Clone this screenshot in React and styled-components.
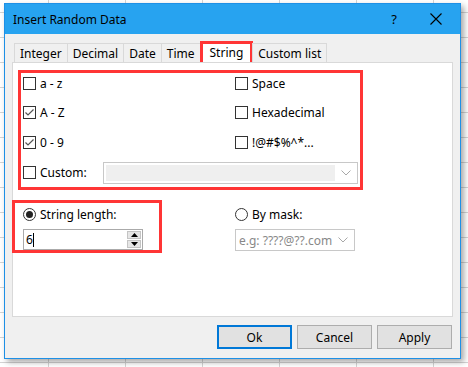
import React from 'react'
import styled, { createGlobalStyle } from 'styled-components'

const GlobalStyle = createGlobalStyle`
    html, body {
        margin: 0;
        padding: 0;
    }
    body {
        font-family: "Noto Sans", "Open Sans", sans-serif;
        font-size: 12px;
        color: #000;
    }
`

const tabs = ['Integer', 'Decimal', 'Date', 'Time', 'String', 'Custom list']

function Check({ checked }) {
    return (
        <CheckBox>
            {checked && (
                <svg width="11" height="11" viewBox="0 0 11 11">
                    <path d="M1.5 5.5 L4 8 L9.5 2.5" fill="none" stroke="#555" strokeWidth="1.2" />
                </svg>
            )}
        </CheckBox>
    )
}

function Option({ checked, children }) {
    return (
        <OptionRow>
            <Check checked={checked} />
            <span>{children}</span>
        </OptionRow>
    )
}

function Radio({ checked, children }) {
    return (
        <OptionRow>
            <RadioCircle>{checked && <RadioDot />}</RadioCircle>
            <span>{children}</span>
        </OptionRow>
    )
}

function Chevron() {
    return (
        <svg width="10" height="6" viewBox="0 0 10 6">
            <path d="M0.5 0.5 L5 5 L9.5 0.5" fill="none" stroke="#a8a8a8" strokeWidth="1" />
        </svg>
    )
}

function App() {
    return (
        <>
            <GlobalStyle />
            <Desktop>
                <Dialog>
                    <TitleBar>
                        <Title>Insert Random Data</Title>
                        <TitleButtons>
                            <Help>?</Help>
                            <svg width="12" height="12" viewBox="0 0 12 12">
                                <path d="M0.5 0.5 L11.5 11.5 M11.5 0.5 L0.5 11.5" stroke="#000" strokeWidth="1.1" />
                            </svg>
                        </TitleButtons>
                    </TitleBar>

                    <Body>
                        <TabStrip>
                            {tabs.map(t => (
                                <Tab key={t} $active={t === 'String'}>{t}</Tab>
                            ))}
                        </TabStrip>

                        <Panel>
                            <CharGroup>
                                <Option>a - z</Option>
                                <Option>Space</Option>
                                <Option checked>A - Z</Option>
                                <Option>Hexadecimal</Option>
                                <Option checked>0 - 9</Option>
                                <Option>!@#$%^*...</Option>
                                <CustomRow>
                                    <Option>Custom:</Option>
                                    <Combo $width={255}>
                                        <ComboField />
                                        <Chevron />
                                    </Combo>
                                </CustomRow>
                            </CharGroup>

                            <LowerRow>
                                <LengthGroup>
                                    <Radio checked>String length:</Radio>
                                    <SpinBox>
                                        <SpinText>6<Caret /></SpinText>
                                        <Spinner>
                                            <SpinButton>
                                                <svg width="7" height="4" viewBox="0 0 7 4"><path d="M0 4 L3.5 0 L7 4 Z" fill="#000" /></svg>
                                            </SpinButton>
                                            <SpinButton>
                                                <svg width="7" height="4" viewBox="0 0 7 4"><path d="M0 0 L3.5 4 L7 0 Z" fill="#000" /></svg>
                                            </SpinButton>
                                        </Spinner>
                                    </SpinBox>
                                </LengthGroup>

                                <MaskGroup>
                                    <Radio>By mask:</Radio>
                                    <Combo $width={120}>
                                        <Placeholder>e.g: ????@??.com</Placeholder>
                                        <Chevron />
                                    </Combo>
                                </MaskGroup>
                            </LowerRow>
                        </Panel>

                        <Footer>
                            <Button $default>Ok</Button>
                            <Button>Cancel</Button>
                            <Button>Apply</Button>
                        </Footer>
                    </Body>
                </Dialog>
            </Desktop>
        </>
    )
}

const Desktop = styled.div`
    width: 468px;
    height: 367px;
    overflow: hidden;
    padding: 3px 0 0 4px;
    box-sizing: border-box;
    background-color: #fff;
    background-image:
        repeating-linear-gradient(to right, transparent 0 48px, #d4d4d4 48px 49px, transparent 49px 77px),
        repeating-linear-gradient(to bottom, transparent 0 12px, #d4d4d4 12px 13px, transparent 13px 25px);
`

const Dialog = styled.div`
    width: 457px;
    height: 356px;
    box-sizing: border-box;
    border: 1px solid #1e90e6;
    background: #f0f0f0;
    display: flex;
    flex-direction: column;
    box-shadow: 3px 3px 6px rgba(0, 0, 0, 0.35);
`

const TitleBar = styled.div`
    height: 30px;
    background: #27a3f0;
    display: flex;
    align-items: center;
    justify-content: space-between;
    padding: 0 18px 0 8px;
    flex-shrink: 0;
`

const Title = styled.div`
    font-size: 12px;
    color: #000;
`

const TitleButtons = styled.div`
    display: flex;
    align-items: center;
    gap: 33px;
`

const Help = styled.span`
    font-size: 13px;
`

const Body = styled.div`
    flex: 1;
    padding: 9px 7px 0 7px;
    display: flex;
    flex-direction: column;
`

const TabStrip = styled.div`
    display: flex;
    align-items: flex-end;
    padding-left: 2px;
    height: 19px;
    position: relative;
    z-index: 1;
`

const Tab = styled.div`
    height: ${p => (p.$active ? '21px' : '19px')};
    box-sizing: border-box;
    padding: 0 5px;
    display: flex;
    align-items: center;
    border: 1px solid #d9d9d9;
    border-bottom: none;
    margin-left: -1px;
    background: ${p => (p.$active ? '#fff' : '#f0f0f0')};
    ${p => p.$active && `
        border: 3px solid #ff3535;
        border-bottom: none;
        padding: 0 7px 2px;
    `}
    &:first-child {
        margin-left: 0;
    }
`

const Panel = styled.div`
    width: 441px;
    height: 255px;
    box-sizing: border-box;
    background: #fff;
    border: 1px solid #d9d9d9;
    padding: 7px 0 0 5px;
`

const CharGroup = styled.div`
    width: 345px;
    height: 120px;
    box-sizing: border-box;
    border: 3px solid #ff3535;
    display: grid;
    grid-template-columns: 212px 1fr;
    grid-template-rows: 20px 20px 20px 22px;
    row-gap: 9.5px;
    align-content: start;
    align-items: center;
    padding: 0 0 0 2px;
`

const OptionRow = styled.div`
    display: flex;
    align-items: center;
    gap: 4px;
    white-space: nowrap;
`

const CheckBox = styled.div`
    width: 13px;
    height: 13px;
    box-sizing: border-box;
    border: 1px solid #333;
    background: #fff;
    display: flex;
    align-items: center;
    justify-content: center;
`

const CustomRow = styled.div`
    grid-column: 1 / 3;
    display: flex;
    align-items: center;
    gap: 16px;
`

const Combo = styled.div`
    width: ${p => p.$width}px;
    height: 22px;
    box-sizing: border-box;
    border: 1px solid #c8c8c8;
    background: #fff;
    padding: 2px 6px 2px 2px;
    display: flex;
    align-items: center;
    gap: 6px;
`

const ComboField = styled.div`
    flex: 1;
    align-self: stretch;
    background: #efefef;
`

const Placeholder = styled.span`
    flex: 1;
    color: #888;
    padding-left: 1px;
    white-space: nowrap;
    overflow: hidden;
`

const LowerRow = styled.div`
    display: flex;
    margin: 10px 0 0 -6px;
`

const LengthGroup = styled.div`
    width: 150px;
    height: 53px;
    box-sizing: border-box;
    border: 3px solid #ff3535;
    padding: 3px 0 0 8px;
    display: flex;
    flex-direction: column;
    gap: 6px;
`

const MaskGroup = styled.div`
    margin-left: 73px;
    padding-top: 6px;
    display: flex;
    flex-direction: column;
    gap: 6px;
`

const RadioCircle = styled.div`
    width: 13px;
    height: 13px;
    box-sizing: border-box;
    border: 1px solid #333;
    border-radius: 50%;
    background: #fff;
    display: flex;
    align-items: center;
    justify-content: center;
`

const RadioDot = styled.div`
    width: 7px;
    height: 7px;
    border-radius: 50%;
    background: #222;
`

const SpinBox = styled.div`
    width: 120px;
    height: 22px;
    box-sizing: border-box;
    border: 1px solid #aaa;
    display: flex;
    align-items: center;
    padding: 0 1px 0 2px;
`

const SpinText = styled.span`
    flex: 1;
    display: flex;
    align-items: center;
`

const Caret = styled.span`
    display: inline-block;
    width: 1px;
    height: 14px;
    background: #000;
`

const Spinner = styled.div`
    display: flex;
    flex-direction: column;
    gap: 1px;
`

const SpinButton = styled.div`
    width: 14px;
    height: 8px;
    box-sizing: border-box;
    background: #e6e6e6;
    border: 1px solid #c4c4c4;
    display: flex;
    align-items: center;
    justify-content: center;
`

const Footer = styled.div`
    display: flex;
    justify-content: flex-end;
    gap: 5px;
    padding: 8px 1px 0 0;
`

const Button = styled.div`
    width: 75px;
    height: 24px;
    box-sizing: border-box;
    border: ${p => (p.$default ? '2px solid #0078d7' : '1px solid #adadad')};
    background: #e1e1e1;
    display: flex;
    align-items: center;
    justify-content: center;
`

export default App
